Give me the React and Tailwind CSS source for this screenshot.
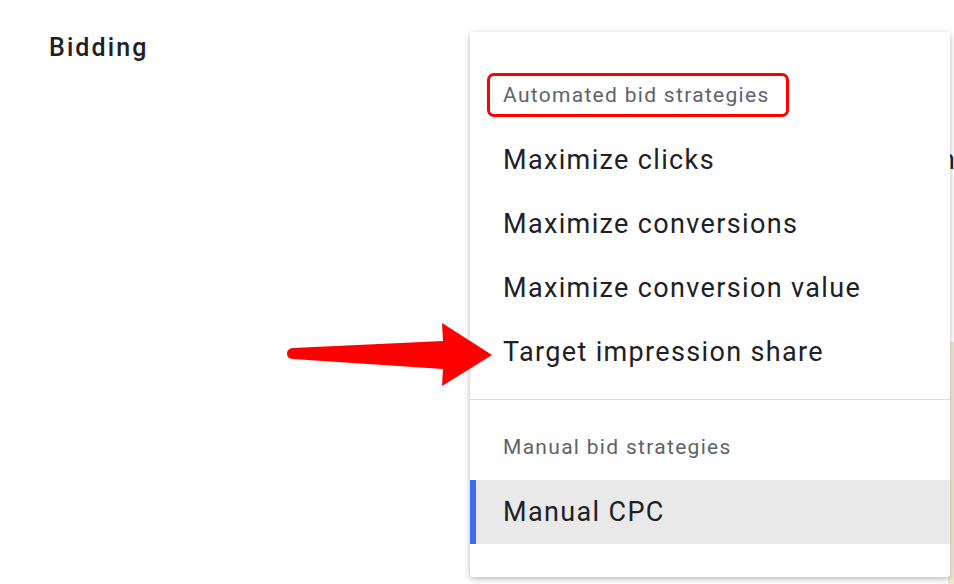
const AUTOMATED = [
  "Maximize clicks",
  "Maximize conversions",
  "Maximize conversion value",
  "Target impression share",
];

function Arrow() {
  return (
    <svg className="absolute left-0 top-0 pointer-events-none" width="954" height="584" viewBox="0 0 954 584">
      <path
        d="M293 348 L443 341 L442 323 L492 355 L442 386 L443 369 L293 359 Q287 358.5 287 353.5 Q287 348.5 293 348 Z"
        fill="#ff0000"
      />
    </svg>
  );
}

export default function App() {
  return (
    <div className="relative w-[954px] h-[584px] overflow-hidden bg-white font-['Roboto',_'Liberation_Sans',_sans-serif]">
      {/* page content behind the dropdown */}
      <div className="px-[49px] pt-[32px] text-[25px] leading-[32px] font-medium tracking-[2.1px] text-[#202124]">Bidding</div>
      <div className="absolute left-[940px] top-[144px] text-[27px] leading-[32px] text-[#202124]">n</div>
      <div className="absolute left-[948px] top-[342px] w-[6px] h-[242px] bg-[#efe9d3]" />

      {/* dropdown menu */}
      <div className="absolute left-[470px] top-[32px] w-[480px] h-[545px] bg-white rounded-[3px] shadow-[0_2px_6px_rgba(0,0,0,0.28)]">
        <div className="pt-[32px] pb-[15px]">
          <div className="relative h-[64px] flex items-center px-[33px] text-[21px] tracking-[1.3px] text-[#5f6368]">
            <div className="absolute left-[17px] top-[9px] w-[302px] h-[44px] border-[3px] border-[#ff0000] rounded-[7px]" />
            Automated bid strategies
          </div>
          {AUTOMATED.map((t) => (
            <div key={t} className="h-[64px] flex items-center px-[33px] text-[27px] tracking-[1.35px] text-[#202124]">
              {t}
            </div>
          ))}
        </div>
        <div className="h-px bg-[#dadce0]" />
        <div className="pt-[16px]">
          <div className="h-[64px] flex items-center px-[33px] text-[21px] tracking-[1.3px] text-[#5f6368]">Manual bid strategies</div>
          <div className="h-[64px] flex items-center px-[33px] text-[27px] tracking-[1.35px] text-[#202124] bg-[#e9e9e9] border-l-[6px] border-[#3b6cf2] pl-[27px]">
            Manual CPC
          </div>
        </div>
      </div>

      <Arrow />
    </div>
  );
}
